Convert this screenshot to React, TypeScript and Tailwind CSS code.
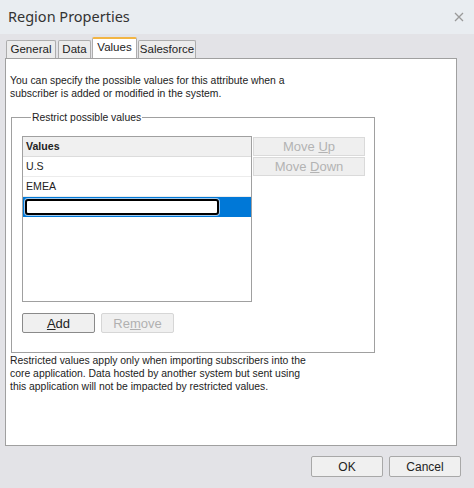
export default function App() {
  const body = { fontFamily: '"Liberation Sans", Arial, sans-serif' };

  return (
    <div className="w-[474px] h-[488px] flex flex-col bg-[#e3e3e7] overflow-hidden" style={body}>
      {/* title bar */}
      <div className="h-[34px] bg-[#e9edf1] flex items-center justify-between pl-[8px] pr-[10px]">
        <span className="text-[14.5px] text-[#333] font-['Noto_Sans',sans-serif]">Region Properties</span>
        <svg width="10" height="10" viewBox="0 0 10 10" className="stroke-[#9a9a9a]">
          <path d="M1 1L9 9M9 1L1 9" strokeWidth="1.3" fill="none" />
        </svg>
      </div>

      {/* tabs */}
      <div className="flex items-end h-[24px] pl-[6px] gap-[2px]">
        <div className="h-[18px] w-[50px] border border-b-0 border-[#adadad] bg-[#ececec] rounded-t-[2px] text-[11.5px] text-[#222] flex items-center justify-center">General</div>
        <div className="h-[18px] w-[33px] border border-b-0 border-[#adadad] bg-[#ececec] rounded-t-[2px] text-[11.5px] text-[#222] flex items-center justify-center">Data</div>
        <div className="h-[21px] w-[45px] -mx-[1px] z-10 border border-b-0 border-[#adadad] border-t-2 border-t-[#f2b544] bg-white rounded-t-[2px] text-[11.5px] text-[#222] flex items-center justify-center pb-[2px]">Values</div>
        <div className="h-[18px] w-[58px] border border-b-0 border-[#adadad] bg-[#ececec] rounded-t-[2px] text-[11.5px] text-[#222] flex items-center justify-center">Salesforce</div>
      </div>

      {/* panel */}
      <div className="ml-[5px] w-[452px] h-[388px] bg-white border border-[#a0a0a0] pl-[4px] pt-[15px]">
        <p className="text-[10.4px] leading-[13px] text-[#222]">
          You can specify the possible values for this attribute when a<br />
          subscriber is added or modified in the system.
        </p>

        <fieldset className="mt-[11px] ml-[1px] w-[364px] h-[242px] border border-[#a0a0a0] pl-[10px] pt-[12px]">
          <legend className="ml-[9px] px-[1px] text-[10.4px] leading-[13px] text-[#222]">Restrict possible values</legend>

          <div className="flex items-start">
            <div className="w-[230px] h-[166px] border border-[#a0a0a0] flex flex-col text-[10.6px] text-[#222]">
              <div className="h-[20px] bg-[#f0f0f0] border-b border-[#dcdcdc] flex items-center pl-[3px] font-bold">Values</div>
              <div className="h-[20px] border-b border-[#ececec] flex items-center pl-[3px]">U.S</div>
              <div className="h-[20px] border-b border-[#ececec] flex items-center pl-[3px]">EMEA</div>
              <div className="h-[20px] bg-[#0078d7] flex items-center pl-[2px]">
                <div className="w-[194px] h-[16px] bg-white border-2 border-black rounded-[3px] ring-1 ring-[#9fc9ef]" />
              </div>
            </div>
            <div className="ml-[1px] flex flex-col gap-[1px] pt-[1px]">
              <button className="w-[112px] h-[19px] bg-[#efefef] border border-[#dadada] text-[13px] text-[#b3b3b3] leading-none">
                Move <span className="underline">U</span>p
              </button>
              <button className="w-[112px] h-[19px] bg-[#efefef] border border-[#dadada] text-[13px] text-[#b3b3b3] leading-none">
                Move <span className="underline">D</span>own
              </button>
            </div>
          </div>

          <div className="flex gap-[6px] mt-[11px]">
            <button className="w-[73px] h-[20px] bg-[#f0f0f0] border border-[#8a8a8a] rounded-[2px] text-[13px] text-[#222] leading-none">
              <span className="underline">A</span>dd
            </button>
            <button className="w-[73px] h-[20px] bg-[#f0f0f0] border border-[#d6d6d6] rounded-[2px] text-[13px] text-[#b0b0b0] leading-none">
              Re<span className="underline">m</span>ove
            </button>
          </div>
        </fieldset>

        <p className="mt-[1px] text-[10.4px] leading-[13px] text-[#222]">
          Restricted values apply only when importing subscribers into the<br />
          core application. Data hosted by another system but sent using<br />
          this application will not be impacted by restricted values.
        </p>
      </div>

      {/* footer */}
      <div className="flex justify-end gap-[6px] pr-[13px] pt-[10px]">
        <button className="w-[72px] h-[21px] bg-[#f0f0f0] border border-[#a8a8a8] rounded-[2px] text-[12px] text-[#222]">OK</button>
        <button className="w-[72px] h-[21px] bg-[#f0f0f0] border border-[#a8a8a8] rounded-[2px] text-[12px] text-[#222]">Cancel</button>
      </div>
    </div>
  );
}
